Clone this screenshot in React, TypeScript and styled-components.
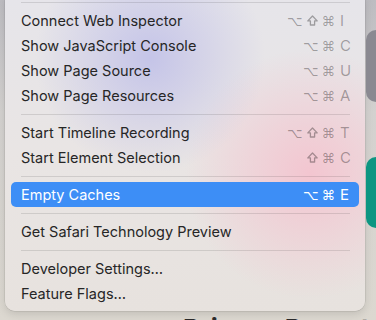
import styled, { createGlobalStyle } from 'styled-components';

const GlobalStyle = createGlobalStyle`
  html, body {
    margin: 0;
    padding: 0;
  }
  body {
    font-family: Inter, "Noto Sans", "DejaVu Sans", sans-serif;
    -webkit-font-smoothing: antialiased;
  }
`;

const Page = styled.div`
  width: 376px;
  height: 320px;
  overflow: hidden;
  display: flex;
  flex-direction: column;
  background: linear-gradient(180deg, #bdbcc1 0%, #d3d1cf 35%, #dcd8d0 100%);
`;

const Top = styled.div`
  display: flex;
  align-items: flex-start;
`;

const Menu = styled.div`
  width: 360px;
  margin: -4px 0 0 5px;
  padding-bottom: 5px;
  border-radius: 0 0 10px 10px;
  box-shadow: 0 0 0 0.5px rgba(0, 0, 0, 0.12), 0 3px 8px rgba(0, 0, 0, 0.12);
  background:
    radial-gradient(circle at 145px 62px, rgba(188, 188, 232, 0.8) 0px, rgba(200, 200, 232, 0) 115px),
    radial-gradient(circle at 305px 178px, rgba(244, 194, 206, 0.9) 0px, rgba(244, 200, 210, 0) 125px),
    linear-gradient(180deg, #e6e5ea 0%, #e9e5e4 50%, #e7e2de 100%);
`;

const Separator = styled.div`
  height: 12px;
  display: flex;
  align-items: center;
  padding: 0 15px 0 16px;

  &::after {
    content: '';
    flex: 1;
    height: 1px;
    background: rgba(0, 0, 0, 0.11);
  }
`;

const Item = styled.div<{ active?: boolean }>`
  height: 25px;
  margin: 0 6px;
  padding: 0 7px 0 10px;
  display: flex;
  align-items: center;
  justify-content: space-between;
  border-radius: 5px;
  background: ${(p) => (p.active ? '#3d8ef6' : 'transparent')};
  color: ${(p) => (p.active ? '#ffffff' : '#262626')};
  font-size: 14.5px;
`;

const Shortcut = styled.div<{ active?: boolean }>`
  display: flex;
  align-items: center;
  gap: 3px;
  color: ${(p) => (p.active ? '#ffffff' : 'rgba(0, 0, 0, 0.32)')};
`;

const Mod = styled.span`
  font-family: "DejaVu Sans", sans-serif;
  font-size: 13.5px;
`;

const ShiftIcon = styled.svg`
  width: 11px;
  height: 11px;
  margin: 0 1px;
`;

const Key = styled.span`
  width: 12px;
  margin-left: 2px;
  font-size: 15px;
`;

const Side = styled.div`
  flex: 1;
  margin-left: 1px;
  padding-top: 30px;
  display: flex;
  flex-direction: column;
`;

const Blob = styled.div<{ color: string; h: number; gap: number }>`
  height: ${(p) => p.h}px;
  margin-bottom: ${(p) => p.gap}px;
  border-radius: 12px 0 0 12px;
  background: ${(p) => p.color};
`;

const Footer = styled.div`
  margin-top: 5px;
  padding-left: 183px;
  font-size: 26px;
  line-height: 1;
  font-weight: 700;
  color: #2a2a2a;
  white-space: nowrap;
`;

function Shift() {
  return (
    <ShiftIcon viewBox="0 0 11 11">
      <path
        d="M5.5 1 L10.2 5.9 H7.6 V10 H3.4 V5.9 H0.8 Z"
        fill="none"
        stroke="currentColor"
        strokeWidth="1.3"
        strokeLinejoin="round"
      />
    </ShiftIcon>
  );
}

type Entry =
  | { kind: 'sep' }
  | { kind: 'item'; label: string; mods?: string[]; key?: string; active?: boolean };

const entries: Entry[] = [
  { kind: 'sep' },
  { kind: 'item', label: 'Connect Web Inspector', mods: ['⌥', '⇧', '⌘'], key: 'I' },
  { kind: 'item', label: 'Show JavaScript Console', mods: ['⌥', '⌘'], key: 'C' },
  { kind: 'item', label: 'Show Page Source', mods: ['⌥', '⌘'], key: 'U' },
  { kind: 'item', label: 'Show Page Resources', mods: ['⌥', '⌘'], key: 'A' },
  { kind: 'sep' },
  { kind: 'item', label: 'Start Timeline Recording', mods: ['⌥', '⇧', '⌘'], key: 'T' },
  { kind: 'item', label: 'Start Element Selection', mods: ['⇧', '⌘'], key: 'C' },
  { kind: 'sep' },
  { kind: 'item', label: 'Empty Caches', mods: ['⌥', '⌘'], key: 'E', active: true },
  { kind: 'sep' },
  { kind: 'item', label: 'Get Safari Technology Preview' },
  { kind: 'sep' },
  { kind: 'item', label: 'Developer Settings…' },
  { kind: 'item', label: 'Feature Flags…' },
];

export default function App() {
  return (
    <Page>
      <GlobalStyle />
      <Top>
        <Menu>
          {entries.map((e, i) =>
            e.kind === 'sep' ? (
              <Separator key={i} />
            ) : (
              <Item key={i} active={e.active}>
                <span>{e.label}</span>
                {e.key && (
                  <Shortcut active={e.active}>
                    {e.mods?.map((m, j) =>
                      m === '⇧' ? <Shift key={j} /> : <Mod key={j}>{m}</Mod>
                    )}
                    <Key>{e.key}</Key>
                  </Shortcut>
                )}
              </Item>
            )
          )}
        </Menu>
        <Side>
          <Blob color="#8a8991" h={72} gap={55} />
          <Blob color="#0d9682" h={71} gap={0} />
        </Side>
      </Top>
      <Footer>Privacy Report</Footer>
    </Page>
  );
}
